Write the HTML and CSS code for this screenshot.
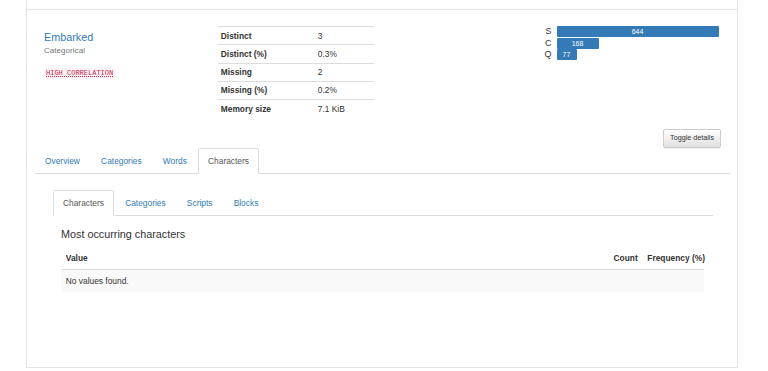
FILE: index.html
```html
<!DOCTYPE html>
<html lang="en">
<head>
    <meta charset="UTF-8">
    <meta name="viewport" content="width=device-width, initial-scale=1.0">
    <title>Embarked</title>
    <link rel="stylesheet" href="styles.css">
</head>
<body>
    <div class="report">
        <div class="item item-prev"></div>

        <div class="item item-main">
            <div class="row">
                <div class="col col-info">
                    <p class="var-name">Embarked</p>
                    <small class="var-type">Categorical</small>
                    <p class="alerts"><code><abbr title="This variable has a high correlation with other fields">HIGH CORRELATION</abbr></code></p>
                </div>

                <div class="col col-stats">
                    <table class="stats">
                        <tr><th>Distinct</th><td>3</td></tr>
                        <tr><th>Distinct (%)</th><td>0.3%</td></tr>
                        <tr><th>Missing</th><td>2</td></tr>
                        <tr><th>Missing (%)</th><td>0.2%</td></tr>
                        <tr><th>Memory size</th><td>7.1 KiB</td></tr>
                    </table>
                </div>

                <div class="col col-chart">
                    <div class="chart">
                        <span class="chart-label">S</span><div class="bar" style="width:162px">644</div>
                        <span class="chart-label">C</span><div class="bar" style="width:42px">168</div>
                        <span class="chart-label">Q</span><div class="bar" style="width:20px">77</div>
                    </div>
                </div>
            </div>

            <div class="toggle-row">
                <button class="btn">Toggle details</button>
            </div>

            <ul class="tabs">
                <li><a href="#">Overview</a></li>
                <li><a href="#">Categories</a></li>
                <li><a href="#">Words</a></li>
                <li class="active"><a href="#">Characters</a></li>
            </ul>

            <div class="pane">
                <ul class="tabs">
                    <li class="active"><a href="#">Characters</a></li>
                    <li><a href="#">Categories</a></li>
                    <li><a href="#">Scripts</a></li>
                    <li><a href="#">Blocks</a></li>
                </ul>

                <div class="pane-body">
                    <h4>Most occurring characters</h4>
                    <table class="freq">
                        <thead>
                            <tr>
                                <th>Value</th>
                                <th class="num">Count</th>
                                <th class="num last"><span>Frequency (%)</span></th>
                            </tr>
                        </thead>
                        <tbody>
                            <tr><td colspan="3">No values found.</td></tr>
                        </tbody>
                    </table>
                </div>
            </div>
        </div>
    </div>
</body>
</html>
```

FILE: styles.css
```css
body { margin: 0; font-family: "Liberation Sans", Arial, sans-serif; font-size: 8.4px; line-height: 12px; color: #333; background: #fff; }
a { color: #337ab7; text-decoration: none; }

.report { width: 712px; margin-left: 26px; }
.item { border: 1px solid #e3e3e3; box-sizing: border-box; }
.item-prev { height: 10px; border-top: 0; }
.item-main { height: 358px; border-top: 0; padding: 0 7px 0 8px; }

/* top row */
.row { display: flex; padding-top: 16px; }
.col { padding: 0 9px; box-sizing: border-box; }
.col-info, .col-stats { width: 25%; }
.col-chart { width: 50%; }

.var-name { margin: 6px 0 0; font-size: 10.8px; line-height: 11.9px; color: #337ab7; }
.var-type { display: block; margin-top: 1.2px; font-size: 8.1px; line-height: 11.6px; color: #777; }
.alerts { margin: 9px 0 0; }
code { display: inline-block; padding: 1px 2px; font-family: "Liberation Mono", monospace; font-size: 7px; line-height: 9.6px; color: #c7254e; background: #f9f2f4; border-radius: 2px; }
abbr { text-decoration: underline dotted; }

.stats { width: 100%; border-collapse: collapse; margin-bottom: 12px; }
.stats th, .stats td { padding: 2.65px 3px; border-top: 1px solid #ddd; text-align: left; line-height: 12px; }
.stats th { width: 91px; font-weight: bold; }

.chart { display: grid; grid-template-columns: 12px auto; grid-auto-rows: 11.6px; column-gap: 5px; align-items: center; margin-left: 148px; }
.chart-label { text-align: right; font-size: 9px; line-height: 11px; color: #333; }
.bar { justify-self: start; height: 11px; background: #337ab7; border-radius: 1px; color: #fff; font-size: 7px; line-height: 11px; text-align: center; }

.toggle-row { text-align: right; padding-right: 9px; }
.btn { font-family: "Liberation Sans", Arial, sans-serif; font-size: 7.2px; line-height: 10.8px; padding: 3px 6px; border: 1px solid #ccc; border-radius: 2px; color: #333; background: linear-gradient(#fff, #e0e0e0); box-shadow: 0 1px 1px rgba(0, 0, 0, .075); }

/* tabs */
.tabs { display: flex; list-style: none; margin: 0; padding: 0; border-bottom: 1px solid #ddd; }
.tabs li { margin-right: 1.2px; margin-bottom: -1px; }
.tabs a { display: block; padding: 5.8px 9px; line-height: 12px; border: 1px solid transparent; border-radius: 2.4px 2.4px 0 0; }
.tabs .active a { color: #555; background: #fff; border-color: #ddd #ddd transparent; }

.pane { padding: 16.4px 17px 0 18px; }
.pane-body { padding: 0 9px 0 8px; }
h4 { margin: 13.4px 0 6.6px; font-size: 10.8px; line-height: 11.9px; font-weight: normal; color: #333; }

.freq { width: 100%; border-collapse: collapse; }
.freq th { padding: 4.8px; line-height: 12px; text-align: left; border-bottom: 1.2px solid #ddd; }
.freq th.num { width: 1%; white-space: nowrap; text-align: right; }
.freq th.last span { margin-right: -5.8px; }
.freq td { padding: 4.8px; line-height: 12px; background: #f9f9f9; }
```
